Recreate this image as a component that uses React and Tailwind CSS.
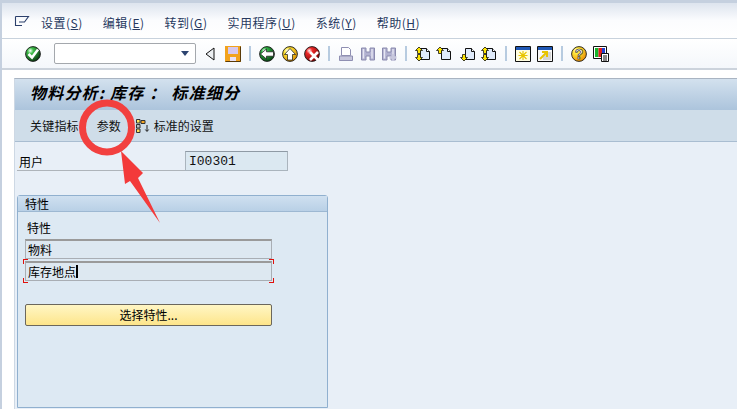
import React from "react";

const cjk = { fontFamily: '"Noto Sans CJK SC", sans-serif' };

const Menu = ({ label, k }) => (
  <span className="text-[12px] leading-none tracking-[0.5px] text-[#27395f] whitespace-nowrap">
    {label}(<span className="underline">{k}</span>)
  </span>
);

const Sep = ({ cls }) => <span className={`w-[2px] h-[15px] bg-[#b7cbe0] shrink-0 ${cls}`} />;

// round SAP status icons
const Ball = ({ from, to, children, id }) => (
  <svg width="16" height="16" viewBox="0 0 16 16" className="shrink-0">
    <defs>
      <radialGradient id={id} cx="32%" cy="28%" r="80%">
        <stop offset="0%" stopColor="#fff" />
        <stop offset="25%" stopColor={from} />
        <stop offset="100%" stopColor={to} />
      </radialGradient>
    </defs>
    <circle cx="8" cy="8" r="7.4" fill={`url(#${id})`} stroke="#1a1a1a" strokeWidth="0.9" />
    {children}
  </svg>
);

const DocIcon = ({ up, down }) => (
  <svg width="16" height="16" viewBox="0 0 16 16" className="shrink-0">
    <path d="M5.5 2.5H11.5L14.5 5.5V13.5H5.5Z" fill="#dfeafa" stroke="#111" />
    <path d="M11.5 2.5V5.5H14.5" fill="#fff" stroke="#111" />
    {up && <path d="M4 1L7.5 4.5H5.5V7.5H2.5V4.5H0.5Z" fill="#ffe600" stroke="#111" strokeWidth="0.8" />}
    {down && <path d="M4 15L7.5 11.5H5.5V8.5H2.5V11.5H0.5Z" fill="#ffe600" stroke="#111" strokeWidth="0.8" />}
  </svg>
);

const Binoculars = ({ plus }) => (
  <svg width="16" height="16" viewBox="0 0 16 16" className="shrink-0">
    <path d="M1.5 2H6V6H10V2H14.5V14H10V10H6V14H1.5Z" fill="#b1b1d0" stroke="#8a8aae" />
    <path d="M3.5 3V12.5M12 3V12.5" stroke="#e6e6f2" strokeWidth="1.4" />
    {plus && <path d="M12 8V15M8.5 11.5H15.5" stroke="#c8c8de" strokeWidth="2.6" />}
  </svg>
);

const CharInput = ({ children, cursor }) => (
  <div className="h-5 w-[247px] border border-[#a9aeb4] border-t-[2px] border-t-[#9a9a9a] bg-[#dde8f1] flex items-center pl-[2px] text-[12px] text-black leading-none">
    {children}
    {cursor && <span className="w-[2px] h-[13px] bg-black" />}
  </div>
);

const Corner = ({ cls }) => <span className={`absolute z-10 w-[5px] h-[5px] border-[#e0100c] ${cls}`} />;

export default function App() {
  return (
    <div className="relative w-[737px] h-[409px] overflow-hidden bg-white flex flex-col border-l-[2px] border-l-[#c5d0df]" style={cjk}>
      {/* menu bar */}
      <div className="h-[39px] shrink-0 border-t-[3px] border-t-[#c5d0df] border-b border-b-[#c8d2dd] bg-gradient-to-b from-[#dde4ee] via-[#fbfcfe] to-white flex items-center pt-[4px] pl-[12px]">
        <svg width="16" height="13" viewBox="0 0 16 13" className="shrink-0 mb-[3px]">
          <path d="M1.5 1.5H14.5L10.5 7H5M1.5 1.5V10.5H8" fill="none" stroke="#2b3f6b" strokeWidth="1.1" />
        </svg>
        <div className="flex gap-[20px] ml-[11px]">
          <Menu label="设置" k="S" />
          <Menu label="编辑" k="E" />
          <Menu label="转到" k="G" />
          <Menu label="实用程序" k="U" />
          <Menu label="系统" k="Y" />
          <Menu label="帮助" k="H" />
        </div>
      </div>

      {/* system toolbar */}
      <div className="h-[31px] shrink-0 border-b-[2px] border-b-[#ccd3dc] bg-gradient-to-b from-white to-[#f4f7fb] flex items-center pl-[23px]">
        <Ball id="okb" from="#3fbf4a" to="#05300c">
          <path d="M3.5 8L7 11.5L13 3.5" fill="none" stroke="#fff" strokeWidth="2.6" />
        </Ball>
        <div className="ml-[13px] w-[142px] h-[21px] rounded-[2px] border border-[#a4a8ad] bg-white flex items-center justify-end pr-[6px] shrink-0">
          <span className="w-0 h-0 border-x-[4px] border-x-transparent border-t-[5px] border-t-[#2c4470]" />
        </div>
        <svg width="10" height="14" viewBox="0 0 10 14" className="ml-[9px] shrink-0">
          <path d="M9 1V13L1 7Z" fill="#eceff2" stroke="#111" />
        </svg>
        <svg width="16" height="16" viewBox="0 0 16 16" className="ml-[10px] shrink-0">
          <path d="M0 0H16V16H0Z" fill="#f2a21c" />
          <path d="M0.5 15.5H15.5V0.5" fill="none" stroke="#5a3a08" />
          <path d="M3 1H13V8H3Z" fill="#d6c8ee" />
          <path d="M5 11H11V15H5Z" fill="#e9e1f4" />
        </svg>
        <Sep cls="ml-[8px]" />
        <span className="ml-[8px] shrink-0 flex">
          <Ball id="backb" from="#2fb344" to="#053d10">
            <path d="M1.5 8L7.5 3V5.8H14.5V10.2H7.5V13Z" fill="#fff" stroke="#111" strokeWidth="0.7" />
          </Ball>
        </span>
        <span className="ml-[7px] shrink-0 flex">
          <Ball id="upb" from="#ffe83a" to="#d98a00">
            <path d="M8 2.5L13.5 8.5H10.5V14H5.5V8.5H2.5Z" fill="#fff" stroke="#111" strokeWidth="0.7" />
          </Ball>
        </span>
        <span className="ml-[6px] shrink-0 flex">
          <Ball id="xb" from="#ee2a2a" to="#7a0000">
            <path d="M6 6L14 14M14 6L6 14" stroke="#fff" strokeWidth="2.6" />
          </Ball>
        </span>
        <Sep cls="ml-[8px]" />
        <svg width="16" height="16" viewBox="0 0 16 16" className="ml-[8px] shrink-0">
          <path d="M3.5 1.5H10.5L12.5 3.5V9.5H3.5Z" fill="#fff" stroke="#8f8fb2" />
          <path d="M1.5 10H14.5V14.5H1.5Z" fill="#c6c6dc" stroke="#8f8fb2" />
        </svg>
        <span className="ml-[6px] flex"><Binoculars /></span>
        <span className="ml-[5px] flex"><Binoculars plus /></span>
        <Sep cls="ml-[8px]" />
        <span className="ml-[8px] flex"><DocIcon up down /></span>
        <span className="ml-[5px] flex"><DocIcon up /></span>
        <span className="ml-[8px] flex"><DocIcon down /></span>
        <span className="ml-[5px] flex"><DocIcon up down /></span>
        <Sep cls="ml-[8px]" />
        <svg width="16" height="16" viewBox="0 0 16 16" className="ml-[8px] shrink-0">
          <path d="M0.5 0.5H15.5V15.5H0.5Z" fill="#fffde0" stroke="#111" />
          <path d="M1 1H15V4H1Z" fill="#1f57b5" />
          <path d="M8 5V14M3.5 9.5H12.5M4.5 6L11.5 13M11.5 6L4.5 13" stroke="#e8c400" strokeWidth="1.1" />
        </svg>
        <svg width="16" height="16" viewBox="0 0 16 16" className="ml-[6px] shrink-0">
          <path d="M0.5 0.5H15.5V15.5H0.5Z" fill="#f8f8f8" stroke="#111" />
          <path d="M1 1H15V4H1Z" fill="#1f57b5" />
          <path d="M10 6H14V14H6V11Z" fill="#d5d5d5" />
          <path d="M3 13L9 7M5 6H10V11" fill="none" stroke="#e8c400" strokeWidth="2" />
        </svg>
        <Sep cls="ml-[8px]" />
        <span className="ml-[8px] shrink-0 flex">
          <Ball id="helpb" from="#ffe83a" to="#ea8a00">
            <text x="8" y="13" textAnchor="middle" fontSize="14" fontWeight="700" fill="#fff" stroke="#111" strokeWidth="0.6" fontFamily="Liberation Sans, sans-serif">?</text>
          </Ball>
        </span>
        <svg width="16" height="16" viewBox="0 0 16 16" className="ml-[6px] shrink-0">
          <path d="M0.5 0.5H13.5V12.5H0.5Z" fill="#fff" stroke="#111" />
          <path d="M2 2H5.5V11H2Z" fill="#18b52c" />
          <path d="M5.5 2H9V11H5.5Z" fill="#e01d1d" />
          <path d="M9 2H12V11H9Z" fill="#2040d0" />
          <path d="M8.5 7.5H15.5V15.5H8.5Z" fill="#fff" stroke="#111" />
          <path d="M10 10H14M10 12H14M10 14H14" stroke="#111" />
        </svg>
      </div>

      {/* white gap, then the screen area */}
      <div className="flex-1 flex flex-col pt-[8px] pl-[12px]">
        <div className="flex-1 flex flex-col border-l border-l-[#cdd8e4] border-t border-t-[#a9b4c2]">
          <div className="h-[31px] shrink-0 bg-gradient-to-b from-[#d3e1ee] to-[#acc4dc] flex items-center pl-[15px] pb-[6px]">
            <span className="text-[16px] font-bold italic tracking-[1.2px] text-black whitespace-pre leading-none">物料分析: 库存 ： 标准细分</span>
          </div>
          <div className="h-[32px] shrink-0 bg-[#cfdde9] border-b border-b-[#a9bdd1] flex items-center pl-[15px] text-[12px] text-[#111] leading-none">
            <span className="tracking-[0.2px]">关键指标</span>
            <span className="ml-[18px]">参数</span>
            <svg width="14" height="14" viewBox="0 0 14 14" className="ml-[15px] shrink-0">
              <path d="M0.5 0.5H4V4H0.5Z" fill="#ffe45c" stroke="#333" />
              <path d="M0.5 5.5H4V9H0.5Z" fill="#bbb" stroke="#333" />
              <path d="M0.5 10H4V13.5H0.5Z" fill="#ffe45c" stroke="#333" />
              <path d="M5 1.5H9V4.5H5Z" fill="#f5a623" stroke="#333" />
              <path d="M11 6V12M9.3 10.5L11 12.5L12.7 10.5" fill="none" stroke="#222" />
            </svg>
            <span className="ml-[4px]">标准的设置</span>
          </div>

          <div className="flex-1 bg-[#e8eff7] pl-[2px] pt-[9px] flex flex-col items-start">
            {/* user row */}
            <div className="flex items-start">
              <div className="w-[168px] h-[20px] border-b border-b-[#aeb4ba] flex items-center pl-[2px] pt-[2px] text-[12px] text-black leading-none">用户</div>
              <div className="w-[103px] h-[20px] border border-[#aab4bd] border-t-[#8f9aa5] bg-[#dbe8f1] flex items-center pl-[3px] text-[13px] leading-none text-[#111]" style={{ fontFamily: '"Liberation Mono", monospace' }}>I00301</div>
            </div>

            {/* group box */}
            <div className="mt-[24px] w-[311px] h-[213px] rounded-t-[3px] border border-[#90b0cf] bg-[#dde9f3] flex flex-col">
              <div className="h-[16px] shrink-0 bg-gradient-to-b from-[#cfe0f0] to-[#b9d0e6] border-b border-b-[#9db8d2] flex items-center pl-[7px] text-[12px] text-black leading-none">特性</div>
              <div className="pl-[7px] flex flex-col items-start">
                <span className="mt-[10px] ml-[2px] text-[12px] text-black leading-none">特性</span>
                <div className="mt-[5px]"><CharInput>物料</CharInput></div>
                <div className="relative mt-[2px]">
                  <CharInput cursor>库存地点</CharInput>
                  <Corner cls="-left-[2px] -top-[2px] border-l border-t" />
                  <Corner cls="-right-[2px] -top-[2px] border-r border-t" />
                  <Corner cls="-left-[2px] -bottom-[2px] border-l border-b" />
                  <Corner cls="-right-[2px] -bottom-[2px] border-r border-b" />
                </div>
                <button className="mt-[23px] w-[247px] h-[22px] rounded-[2px] border border-[#6b675c] bg-gradient-to-b from-[#fff6c4] to-[#fde58a] text-[12px] text-black leading-none flex items-center justify-center">
                  选择特性...
                </button>
              </div>
            </div>
          </div>
        </div>
      </div>

      {/* red annotation drawn over the screen */}
      <svg width="737" height="409" viewBox="0 0 737 409" className="absolute -left-[2px] top-0 pointer-events-none">
        <circle cx="107" cy="127.5" r="24.5" fill="none" stroke="#f2403f" strokeWidth="7" />
        <path d="M121 151L143 173L138 178L160 223L130 181L125 184Z" fill="#f33a3a" />
      </svg>
    </div>
  );
}
